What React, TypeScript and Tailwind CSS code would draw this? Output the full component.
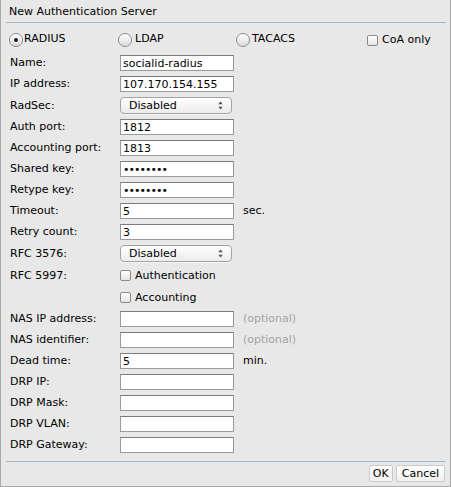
import React from "react";

const font = "font-['DejaVu_Sans',Verdana,sans-serif]";

function Radio({ checked }: { checked?: boolean }) {
  return (
    <span className="w-[14px] h-[14px] rounded-full border border-[#8a8a8a] bg-gradient-to-b from-white to-[#dcdcdc] flex items-center justify-center shrink-0 shadow-[inset_0_1px_1px_rgba(255,255,255,0.8)]">
      {checked && <span className="w-[4px] h-[4px] rounded-full bg-[#1a1a1a]" />}
    </span>
  );
}

function Check() {
  return (
    <span className="w-[11px] h-[11px] rounded-[2px] border border-[#8a8a8a] bg-gradient-to-b from-white to-[#e4e4e4] shrink-0" />
  );
}

function TextInput({ value = "", password = false }: { value?: string; password?: boolean }) {
  return (
    <input
      readOnly
      type={password ? "password" : "text"}
      defaultValue={value}
      className={`w-[114px] h-[16px] border border-[#9a9a9a] border-t-[#7c7c7c] bg-white px-[2px] text-[11px] leading-[14px] text-black outline-none ${font} ${password ? "tracking-[-1px]" : ""}`}
    />
  );
}

function Select({ value }: { value: string }) {
  return (
    <div className="w-[112px] h-[17px] rounded-[4px] border border-[#a3a3a3] bg-gradient-to-b from-white to-[#ececec] flex items-center pl-[8px] pr-[8px] shadow-[0_1px_0_rgba(255,255,255,0.6)]">
      <span className="flex-1 leading-[15px]">{value}</span>
      <svg width="5" height="9" viewBox="0 0 5 9">
        <path d="M2.5 0.5 L4.8 3.3 L0.2 3.3 Z" fill="#555" />
        <path d="M2.5 8.5 L4.8 5.7 L0.2 5.7 Z" fill="#555" />
      </svg>
    </div>
  );
}

function Row({
  label,
  children,
  h = 16,
  unit,
  unitGray,
}: {
  label?: string;
  children: React.ReactNode;
  h?: number;
  unit?: string;
  unitGray?: boolean;
}) {
  return (
    <div className={`flex items-center ${h === 17 ? "h-[17px]" : "h-[16px]"}`}>
      <span className="w-[110px] shrink-0 leading-[14px]">{label}</span>
      {children}
      {unit && (
        <span className={`ml-[9px] leading-[14px] ${unitGray ? "text-[#a3a3a3]" : "text-black"}`}>{unit}</span>
      )}
    </div>
  );
}

export default function App() {
  return (
    <div
      className={`relative w-[451px] h-[487px] bg-[#e8e8e8] border-l border-r border-b border-[#a9a9a9] text-[11px] text-black flex flex-col ${font}`}
    >
      <div className="pl-[8px] pt-[5px] h-[22px] leading-[13px]">New Authentication Server</div>
      <div className="ml-[5px] mr-[4px] h-px bg-[#a2b6c9]" />

      <div className="flex items-center h-[16px] mt-[9px] pl-[8px]">
        <div className="w-[109px] flex items-center gap-[1px]">
          <Radio checked />
          <span className="leading-[14px] -mt-[2px]">RADIUS</span>
        </div>
        <div className="w-[118px] flex items-center gap-[3px]">
          <Radio />
          <span className="leading-[14px] -mt-[2px]">LDAP</span>
        </div>
        <div className="w-[131px] flex items-center gap-[2px]">
          <Radio />
          <span className="leading-[14px] -mt-[2px]">TACACS</span>
        </div>
        <div className="flex items-center gap-[4px]">
          <Check />
          <span className="leading-[14px]">CoA only</span>
        </div>
      </div>

      <div className="flex flex-col gap-[5px] mt-[7px] pl-[9px]">
        <Row label="Name:">
          <TextInput value="socialid-radius" />
        </Row>
        <Row label="IP address:">
          <TextInput value="107.170.154.155" />
        </Row>
        <Row label="RadSec:" h={17}>
          <Select value="Disabled" />
        </Row>
        <Row label="Auth port:">
          <TextInput value="1812" />
        </Row>
        <Row label="Accounting port:">
          <TextInput value="1813" />
        </Row>
        <Row label="Shared key:">
          <TextInput value="12345678" password />
        </Row>
        <Row label="Retype key:">
          <TextInput value="12345678" password />
        </Row>
        <Row label="Timeout:" unit="sec.">
          <TextInput value="5" />
        </Row>
        <Row label="Retry count:">
          <TextInput value="3" />
        </Row>
        <Row label="RFC 3576:" h={17}>
          <Select value="Disabled" />
        </Row>
        <Row label="RFC 5997:" h={17}>
          <div className="flex items-center gap-[4px]">
            <Check />
            <span className="leading-[14px]">Authentication</span>
          </div>
        </Row>
        <Row h={17}>
          <div className="flex items-center gap-[4px]">
            <Check />
            <span className="leading-[14px]">Accounting</span>
          </div>
        </Row>
        <Row label="NAS IP address:" unit="(optional)" unitGray>
          <TextInput />
        </Row>
        <Row label="NAS identifier:" unit="(optional)" unitGray>
          <TextInput />
        </Row>
        <Row label="Dead time:" unit="min.">
          <TextInput value="5" />
        </Row>
        <Row label="DRP IP:">
          <TextInput />
        </Row>
        <Row label="DRP Mask:">
          <TextInput />
        </Row>
        <Row label="DRP VLAN:">
          <TextInput />
        </Row>
        <Row label="DRP Gateway:">
          <TextInput />
        </Row>
      </div>

      <div className="mt-[8px] ml-[5px] mr-[5px] h-px bg-[#a2b6c9]" />
      <div className="flex justify-end gap-[3px] mt-[3px] pr-[5px]">
        <button className="h-[17px] px-[3px] border border-[#c9c9c9] bg-gradient-to-b from-white to-[#f1f1f1] rounded-[2px] leading-[15px] text-[11px] text-black">
          OK
        </button>
        <button className="h-[17px] px-[5px] border border-[#c9c9c9] bg-gradient-to-b from-white to-[#f1f1f1] rounded-[2px] leading-[15px] text-[11px] text-black">
          Cancel
        </button>
      </div>
    </div>
  );
}
